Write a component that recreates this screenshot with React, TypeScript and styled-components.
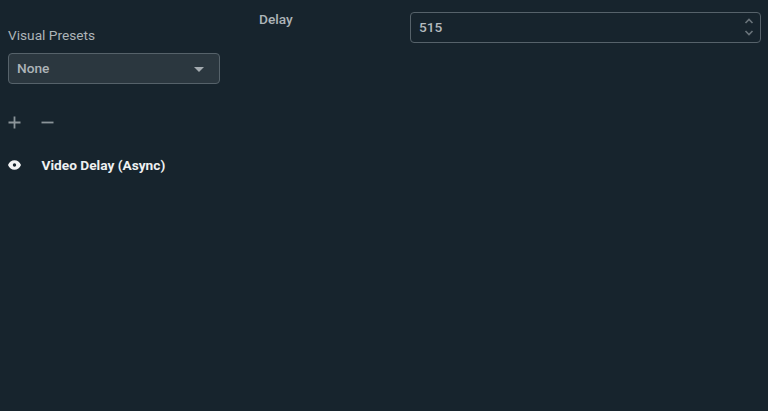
import React from "react";
import styled, { createGlobalStyle } from "styled-components";

const Global = createGlobalStyle`
  html, body { margin: 0; padding: 0; background: #17242d; }
  body { font-family: Roboto, "Liberation Sans", sans-serif; }
`;

const Page = styled.div`
  width: 768px;
  height: 411px;
  overflow: hidden;
  background: #17242d;
  display: grid;
  grid-template-columns: 259px 151px 351px;
  align-items: start;
  box-sizing: border-box;
`;

const LeftColumn = styled.div`
  display: flex;
  flex-direction: column;
  padding: 27px 0 0 8px;
`;

const Label = styled.div`
  font-size: 13.7px;
  line-height: 16px;
  font-weight: 400;
  color: #adb4b8;
  white-space: nowrap;
`;

const DelayLabel = styled(Label)`
  margin-top: 11px;
  font-weight: 500;
`;

const Select = styled.div`
  margin-top: 10px;
  width: 212px;
  height: 31px;
  box-sizing: border-box;
  border: 1px solid #56626a;
  border-radius: 4px;
  background: #2b373f;
  display: flex;
  align-items: center;
  justify-content: space-between;
  padding: 0 15px 2px 8px;
  font-size: 13.7px;
  font-weight: 500;
  color: #adb4b8;
`;

const Caret = styled.span`
  width: 0;
  height: 0;
  margin-top: 4px;
  border-left: 5px solid transparent;
  border-right: 5px solid transparent;
  border-top: 5px solid #a4abb0;
`;

const Tools = styled.div`
  display: flex;
  align-items: center;
  gap: 20px;
  margin-top: 30px;
  height: 16px;
`;

const ToolIcon = styled.svg`
  width: 13px;
  height: 13px;
  display: block;
  stroke: #8b9499;
  stroke-width: 1.8;
  fill: none;
`;

const Row = styled.div`
  display: flex;
  align-items: center;
  margin-top: 26px;
  height: 18px;
`;

const Eye = styled.svg`
  width: 13px;
  height: 10px;
  display: block;
  margin-right: 20.5px;
`;

const RowTitle = styled.span`
  font-size: 13.7px;
  font-weight: 700;
  color: #eef0f1;
  white-space: nowrap;
`;

const NumberField = styled.div`
  margin-top: 12px;
  width: 351px;
  height: 31px;
  box-sizing: border-box;
  border: 1px solid #56626a;
  border-radius: 4px;
  display: flex;
  align-items: center;
  justify-content: space-between;
  padding: 0 5px 1px 8px;
  font-size: 13.7px;
  font-weight: 500;
  color: #b5bbbf;
`;

const Spinner = styled.svg`
  width: 12px;
  height: 22px;
  display: block;
  fill: none;
  stroke: #69737a;
  stroke-width: 1.6;
`;

export default function App() {
  return (
    <Page>
      <Global />
      <LeftColumn>
        <Label>Visual Presets</Label>
        <Select>
          None
          <Caret />
        </Select>
        <Tools>
          <ToolIcon viewBox="0 0 13 13"><path d="M6.5 0.5v12M0.5 6.5h12" /></ToolIcon>
          <ToolIcon viewBox="0 0 13 13"><path d="M0.5 6.5h12" /></ToolIcon>
        </Tools>
        <Row>
          <Eye viewBox="0 0 13 10">
            <path fillRule="evenodd" fill="#f2f3f4" d="M6.5 0.2C3.6 0.2 1.2 2.1 0 5c1.2 2.9 3.600 4.800 6.500 4.800S11.800 7.900 13 5C11.800 2.100 9.400 0.200 6.500 0.200zM6.500 6.700a1.700 1.700 0 1 1 0-3.400 1.700 1.700 0 0 1 0 3.400z" />
          </Eye>
          <RowTitle>Video Delay (Async)</RowTitle>
        </Row>
      </LeftColumn>
      <DelayLabel>Delay</DelayLabel>
      <NumberField>
        515
        <Spinner viewBox="0 0 12 22">
          <path d="M2.500 7L6 3.500 9.500 7M2.500 15L6 18.500 9.500 15" />
        </Spinner>
      </NumberField>
    </Page>
  );
}
